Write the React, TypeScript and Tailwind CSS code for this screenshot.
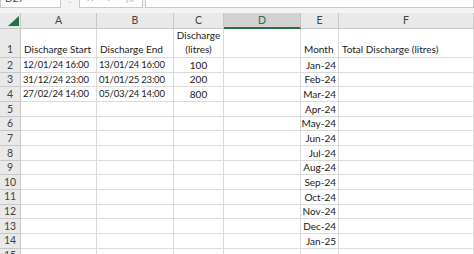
import React from 'react';

const cols = 'grid grid-cols-[21px_76px_77px_50px_77px_38px_1fr]';
const cell = 'border-r border-b border-[#dadada] px-[3px] overflow-hidden whitespace-nowrap';
const date = 'text-[9.5px] tracking-[-0.2px] pl-[2px]';

const rows = [
  { start: '12/01/24 16:00', end: '13/01/24 16:00', qty: '100', month: 'Jan-24' },
  { start: '31/12/24 23:00', end: '01/01/25 23:00', qty: '200', month: 'Feb-24' },
  { start: '27/02/24 14:00', end: '05/03/24 14:00', qty: '800', month: 'Mar-24' },
  { month: 'Apr-24' },
  { month: 'May-24' },
  { month: 'Jun-24' },
  { month: 'Jul-24' },
  { month: 'Aug-24' },
  { month: 'Sep-24' },
  { month: 'Oct-24' },
  { month: 'Nov-24' },
  { month: 'Dec-24' },
  { month: 'Jan-25' },
  {},
];

const headers = ['A', 'B', 'C', 'D', 'E', 'F'];

const App = () => {
  return (
    <div
      className="w-[474px] h-[254px] overflow-hidden bg-white text-[#1a1a1a] text-[10px] leading-none"
      style={{ fontFamily: 'Lato, "Open Sans", sans-serif' }}
    >
      {/* Formula bar (cut off at top) */}
      <div className="h-[8px] overflow-hidden bg-[#f3f3f3]">
        <div className="flex h-[20px] -mt-[12px] items-stretch">
          <div className="w-[61px] bg-white border border-[#c8c8c8] flex items-center pl-[4px] text-[#444]">D27</div>
          <div className="w-[18px] flex items-center justify-center text-[#aaa]">⋮</div>
          <div className="w-[64px] bg-white border border-[#c8c8c8] flex items-center gap-[12px] pl-[6px] text-[#bbb]">
            <span>✕</span>
            <span>✓</span>
            <span className="italic">fx</span>
          </div>
          <div className="flex-1 ml-[2px] bg-white border border-[#c8c8c8]" />
        </div>
      </div>
      <div className="h-[5px] bg-[#f3f3f3]" />

      {/* Column headers */}
      <div className={`${cols} h-[16px] bg-[#e9e9e9] text-[#444] text-[10.5px]`}>
        <div className="relative border-r border-b border-[#c8c8c8]">
          <svg className="absolute left-[8px] top-[3px]" width="11" height="10" viewBox="0 0 11 10">
            <polygon points="11,0 11,10 0,10" fill="#217346" />
          </svg>
        </div>
        {headers.map((h) => (
          <div
            key={h}
            className={
              h === 'D'
                ? 'flex items-center justify-center bg-[#d2d2d2] border-r border-[#c8c8c8] border-b-2 border-b-[#217346] text-[#35674b]'
                : 'flex items-center justify-center border-r border-b border-[#c8c8c8]'
            }
          >
            {h}
          </div>
        ))}
      </div>

      {/* Row 1 */}
      <div className={`${cols} h-[29px]`}>
        <div className="flex items-end justify-center pb-[3px] bg-[#e9e9e9] border-r border-b border-[#c8c8c8] text-[#444] text-[10.5px]">1</div>
        <div className={`${cell} flex items-end pb-[3px]`}>Discharge Start</div>
        <div className={`${cell} flex items-end pb-[3px]`}>Discharge End</div>
        <div className={`${cell} flex flex-col items-center justify-end pb-[3px] gap-[4px]`}>
          <span>Discharge</span>
          <span>(litres)</span>
        </div>
        <div className={cell} />
        <div className={`${cell} flex items-end pb-[3px]`}>Month</div>
        <div className={`${cell} flex items-end pb-[3px]`}>Total Discharge (litres)</div>
      </div>

      {/* Data rows */}
      {rows.map((r, i) => (
        <div key={i} className={`${cols} h-[14.67px]`}>
          <div className="flex items-center justify-center bg-[#e9e9e9] border-r border-b border-[#c8c8c8] text-[#444] text-[10.5px]">{i + 2}</div>
          <div className={`${cell} ${date} flex items-center`}>{r.start}</div>
          <div className={`${cell} ${date} flex items-center`}>{r.end}</div>
          <div className={`${cell} flex items-center justify-center`}>{r.qty}</div>
          <div className={cell} />
          <div className={`${cell} flex items-center justify-end pr-[2px]`}>{r.month}</div>
          <div className={cell} />
        </div>
      ))}
    </div>
  );
};

export default App;
